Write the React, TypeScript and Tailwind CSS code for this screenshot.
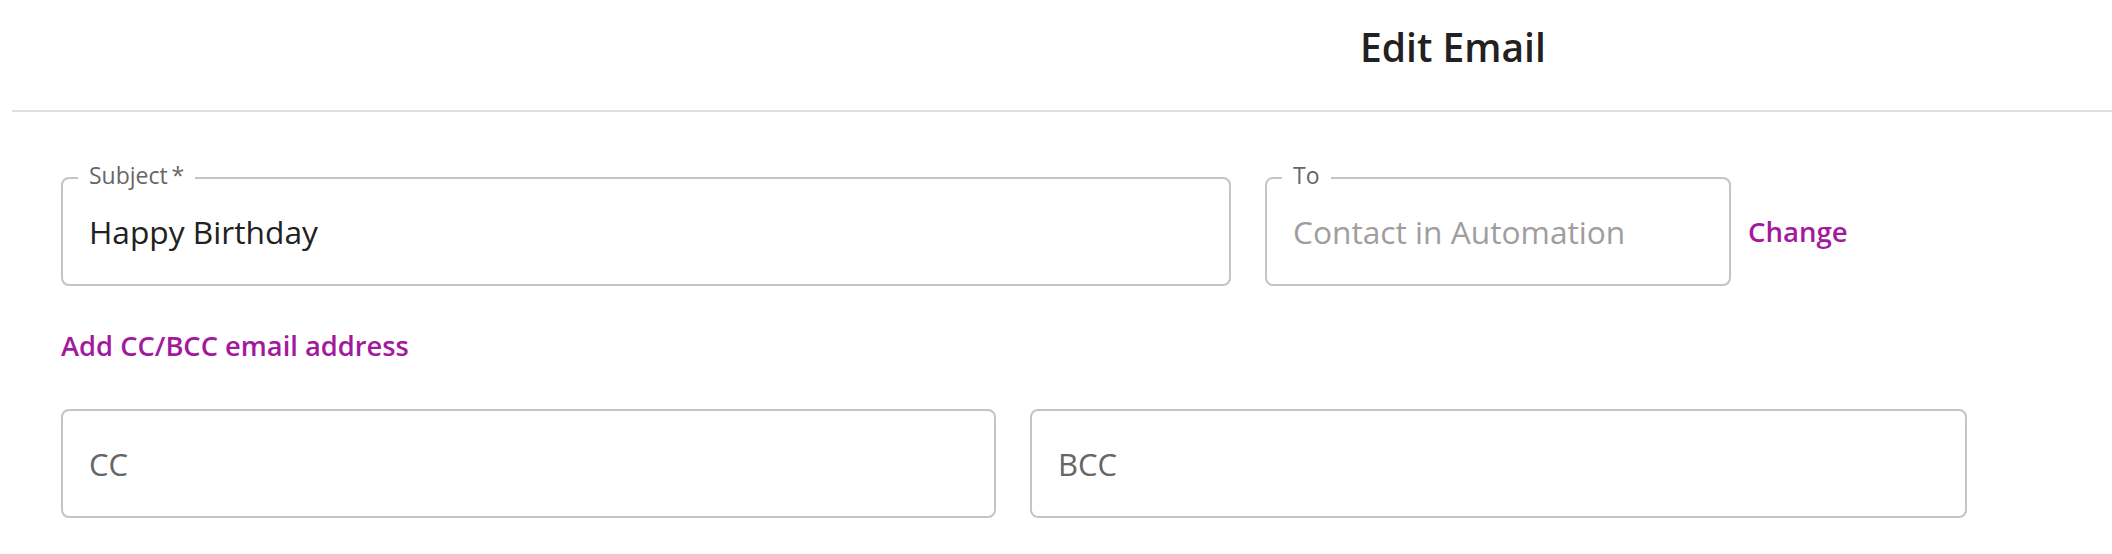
import React from "react";

type FieldProps = {
  label?: string;
  value?: string;
  placeholder?: string;
  className?: string;
};

function OutlinedField({ label, value, placeholder, className }: FieldProps) {
  return (
    <div
      className={`relative flex h-[109px] shrink-0 items-center rounded-[8px] border-2 border-[#c4c4c4] pl-[26px] ${className ?? ""}`}
    >
      {label ? (
        <span className="absolute left-[15px] top-[-16px] bg-white px-[11px] text-[23px] leading-[24px] text-[#666666]">
          {label}
        </span>
      ) : null}
      {value ? (
        <span className="text-[31.7px] leading-[42px] text-[#212121]">{value}</span>
      ) : (
        <span className="text-[31.7px] leading-[42px] text-[#9e9e9e]">{placeholder}</span>
      )}
    </div>
  );
}

function UnlabeledField({ text, className }: { text: string; className?: string }) {
  return (
    <div
      className={`flex h-[109px] shrink-0 items-center rounded-[8px] border-2 border-[#c4c4c4] pl-[26px] ${className ?? ""}`}
    >
      <span className="text-[31px] leading-[42px] text-[#666666]">{text}</span>
    </div>
  );
}

export default function App() {
  return (
    <div className="h-[554px] w-[2112px] overflow-hidden bg-white font-['Open_Sans','Noto_Sans',sans-serif]">
      {/* header */}
      <div className="ml-[12px] h-[112px] border-b-2 border-[#e0e0e0] pl-[1348px] pt-[20px]">
        <h1 className="text-[39px] font-semibold leading-[53px] text-[#212121]">Edit Email</h1>
      </div>

      <div className="px-[61px]">
        <div className="mt-[65px] flex items-center">
          <OutlinedField label={"Subject\u2009*"} value="Happy Birthday" className="w-[1170px]" />
          <OutlinedField
            label="To"
            placeholder="Contact in Automation"
            className="ml-[34px] w-[466px]"
          />
          <button
            type="button"
            className="ml-[17px] text-[27.6px] font-semibold leading-[37px] text-[#a3199d]"
          >
            Change
          </button>
        </div>

        <button
          type="button"
          className="mt-[41px] block text-[27.3px] font-semibold leading-[37px] text-[#a3199d]"
        >
          Add CC/BCC email address
        </button>

        <div className="mt-[45px] flex gap-[34px]">
          <UnlabeledField text="CC" className="w-[935px]" />
          <UnlabeledField text="BCC" className="w-[937px]" />
        </div>
      </div>
    </div>
  );
}
